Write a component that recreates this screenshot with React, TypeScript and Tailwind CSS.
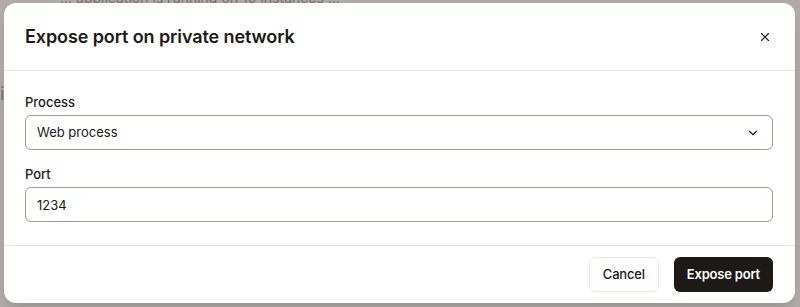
import { ChevronDown, X } from 'lucide-react';

export default function App() {
  return (
    <div className="relative w-[800px] h-[307px] overflow-hidden bg-[#b2aaa8] font-['Inter',sans-serif]">
      {/* Dimmed page behind the dialog */}
      <div className="absolute inset-0 text-[#7a706e] text-sm">
        <div className="absolute left-[60px] -top-[12px] whitespace-nowrap">
          ... application is running on 10 instances { } ...
        </div>
        <div className="absolute left-0 top-[80px] text-lg">i</div>
      </div>

      {/* Dialog */}
      <div className="relative pt-[3px] pl-[4px] pr-[5px]">
        <div className="bg-white rounded-xl shadow-lg flex flex-col h-[300px]">
          <div className="h-[68px] flex items-center justify-between pl-[21px] pr-[23px] border-b border-[#ebe4df]">
            <h2 className="text-[18px] font-semibold text-[#1c1917] tracking-[-0.1px]">
              Expose port on private network
            </h2>
            <button className="text-[#1c1917]">
              <X size={14} strokeWidth={2} />
            </button>
          </div>

          <div className="flex-1 pl-[21px] pr-[22px] pt-[22px] flex flex-col">
            <label className="text-[13px] leading-[18px] font-medium text-[#1c1917] mb-[4px]">Process</label>
            <div className="h-[35px] border border-[#a8958f] rounded-md flex items-center justify-between pl-[11px] pr-[12px]">
              <span className="text-[13px] text-[#1c1917]">Web process</span>
              <ChevronDown size={14} className="text-[#1c1917]" />
            </div>

            <label className="text-[13px] leading-[18px] font-medium text-[#1c1917] mt-[15px] mb-[4px]">Port</label>
            <input
              defaultValue="1234"
              className="h-[35px] border border-[#a8958f] rounded-md px-[11px] text-[13px] text-[#1c1917] outline-none"
            />
          </div>

          <div className="h-[58px] border-t border-[#ebe4df] flex items-center justify-end gap-[15px] pl-[23px] pr-[22px]">
            <button className="h-[35px] px-[13px] rounded-md border border-[#efe6e1] text-[13px] font-medium text-[#1c1917] tracking-[-0.2px]">
              Cancel
            </button>
            <button className="h-[35px] px-[13px] rounded-md bg-[#1c1917] text-[13px] font-semibold text-white tracking-[-0.2px]">
              Expose port
            </button>
          </div>
        </div>
      </div>
    </div>
  );
}
